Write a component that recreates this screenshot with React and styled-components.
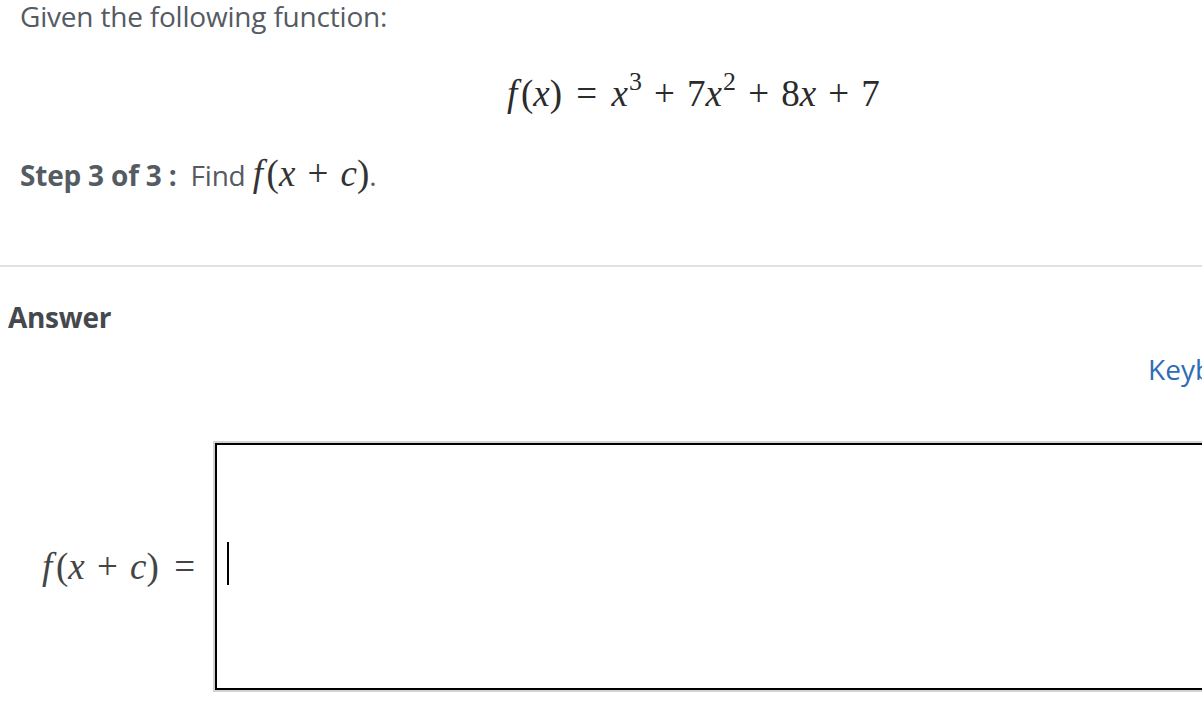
import React from "react";
import styled, { createGlobalStyle } from "styled-components";

const Global = createGlobalStyle`
  html, body { margin: 0; padding: 0; background: #fff; overflow: hidden; }
  body { width: 1202px; height: 704px; }
`;

const Page = styled.div`
  width: 1420px;
  font-family: "Open Sans", "Liberation Sans", sans-serif;
  color: #555b62;
`;

const Intro = styled.section`
  padding: 0 0 0 20px;
`;

const Lead = styled.p`
  margin: 0;
  font-size: 28px;
  line-height: 32px;
  letter-spacing: -0.2px;
`;

const Display = styled.div`
  margin-top: 42px;
  padding-left: 487px;
  font-family: "Liberation Serif", "Times New Roman", serif;
  font-size: 37px;
  line-height: 40px;
  color: #2b2b2b;
  white-space: nowrap;
`;

const Step = styled.p`
  margin: 41px 0 0;
  font-size: 28px;
  line-height: 40px;
  white-space: nowrap;
  letter-spacing: -0.2px;
`;

const StepLabel = styled.strong`
  font-weight: 700;
  margin-right: 14px;
`;

const M = styled.span`
  font-family: "Liberation Serif", "Times New Roman", serif;
  font-size: 37px;
  line-height: 0;
  letter-spacing: 0;
  color: #333;
`;

const I = styled.i`
  font-style: italic;
  margin-right: ${(p) => p.$r || 0}em;
`;

const Op = styled.span`
  margin: 0 ${(p) => p.$m || 0.329}em;
`;

const Sup = styled.sup`
  font-size: 0.7em;
  line-height: 0;
  vertical-align: 0.6em;
  margin-left: 0.04em;
`;

const Rule = styled.hr`
  margin: 70px 0 0;
  border: 0;
  border-top: 2px solid #e1e1e1;
`;

const AnswerPanel = styled.section`
  padding: 34px 0 0 8px;
`;

const AnswerTitle = styled.h2`
  margin: 0;
  font-size: 28px;
  line-height: 32px;
  font-weight: 700;
  color: #45494e;
  letter-spacing: -0.3px;
`;

const Tools = styled.div`
  display: flex;
  justify-content: flex-end;
  margin-top: 20px;
  padding-right: 15px;
`;

const KeyboardLink = styled.a`
  font-size: 28px;
  line-height: 32px;
  color: #2f6db5;
  text-decoration: none;
  white-space: nowrap;
`;

const AnswerRow = styled.div`
  display: flex;
  align-items: center;
  margin-top: 58px;
`;

const Label = styled.div`
  width: 205px;
  padding-left: 34px;
  box-sizing: border-box;
  font-family: "Liberation Serif", "Times New Roman", serif;
  font-size: 37px;
  color: #444;
  white-space: nowrap;
`;

const InputBox = styled.div`
  flex: 1;
  height: 243px;
  border: 2px solid #000;
  box-shadow: 0 0 0 2px #d3d3d3;
  display: flex;
  align-items: center;
  padding-left: 10px;
  margin-left: 2px;
`;

const Caret = styled.span`
  display: block;
  width: 1.5px;
  height: 43px;
  margin-top: -6px;
  background: #000;
`;

export default function App() {
  return (
    <Page>
      <Global />
      <Intro>
        <Lead>Given the following function:</Lead>
        <Display>
          <I $r={0.1}>f</I>(<I>x</I>)<Op $m={0.385}>=</Op>
          <I>x</I><Sup>3</Sup><Op>+</Op>7<I>x</I><Sup>2</Sup><Op>+</Op>8<I>x</I>
          <Op>+</Op>7
        </Display>
        <Step>
          <StepLabel>Step 3 of 3 :</StepLabel>Find{" "}
          <M>
            <I $r={0.1}>f</I>(<I>x</I><Op>+</Op><I>c</I>)
          </M>
          .
        </Step>
      </Intro>
      <Rule />
      <AnswerPanel>
        <AnswerTitle>Answer</AnswerTitle>
        <Tools>
          <KeyboardLink href="#">Keyboard Shortcuts</KeyboardLink>
        </Tools>
        <AnswerRow>
          <Label>
            <I $r={0.1}>f</I>(<I>x</I><Op>+</Op><I>c</I>)<Op $m={0.42}>=</Op>
          </Label>
          <InputBox>
            <Caret />
          </InputBox>
        </AnswerRow>
      </AnswerPanel>
    </Page>
  );
}
